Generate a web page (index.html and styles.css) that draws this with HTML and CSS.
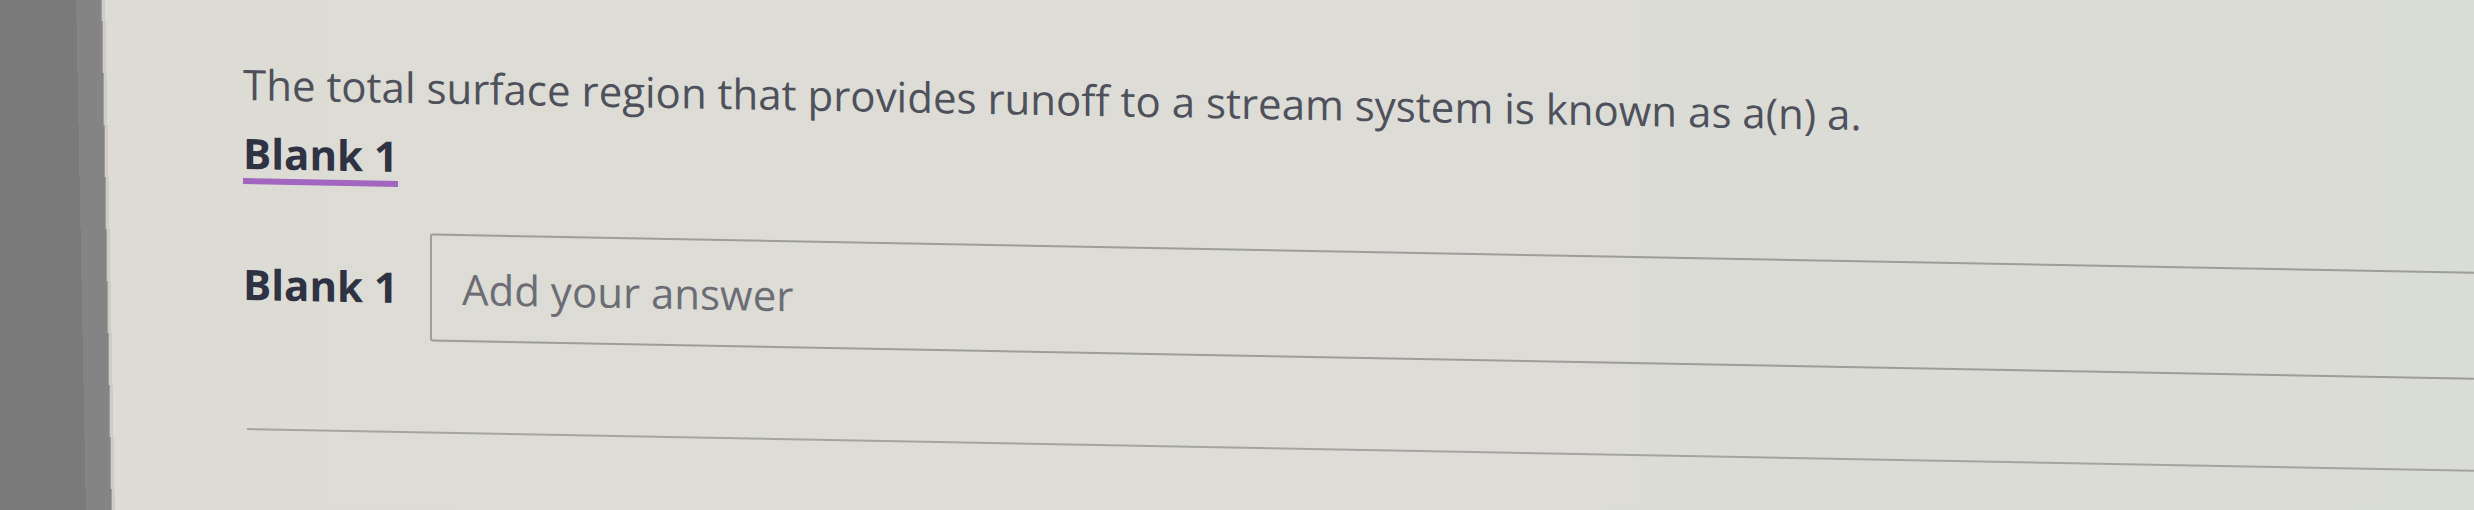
FILE: index.html
```html
<!DOCTYPE html>
<html lang="en" dir="ltr">

<head>
  <meta charset="utf-8">
  <title>Fill in the blank</title>
  <link rel="stylesheet" href="styles.css">
</head>

<body>
  <div class="screen">
    <div class="sidebar"></div>
    <main class="question">
      <p class="prompt">The total surface region that provides runoff to a stream system is known as a(n) a.</p>
      <h2 class="blank-title">Blank 1</h2>
      <div class="answer-row">
        <label class="blank-label" for="blank1">Blank 1</label>
        <input id="blank1" class="answer-input" type="text" placeholder="Add your answer">
      </div>
      <hr class="divider">
    </main>
  </div>
</body>

</html>
```

FILE: styles.css
```css
body {
  margin: 0;
  overflow: hidden;
  font-family: "Open Sans", "DejaVu Sans", sans-serif;
  background: linear-gradient(to right, #dcdbd4, #dddcd6 55%, #dadcd6);
}

.screen {
  display: flex;
  height: 510px;
}

/* dark frame on the left, leaning a little */
.sidebar {
  flex: 0 0 134px;
  margin-left: -22px;
  background: linear-gradient(to right, #797a79 0 103px, #838483 103px 128px, #a09e9a 128px 129px, #cfccc7 129px 132px, #dcdbd4 132px);
  transform: skewX(1.1deg);
}

.question {
  flex: 1;
  min-width: 0;
  padding: 55px 0 0 131px;
  transform: skewY(1.07deg);
  transform-origin: 131px 0;
}

.prompt {
  margin: 0;
  font-size: 42px;
  line-height: 58px;
  color: #4e515b;
  white-space: nowrap;
}

.blank-title {
  width: fit-content;
  margin: 16px 0 0;
  padding-bottom: 1px;
  font-size: 42px;
  line-height: 48px;
  font-weight: 700;
  color: #2e3243;
  border-bottom: 6px solid #a266c1;
}

.answer-row {
  display: flex;
  align-items: center;
  margin: 46px -60px 0 0;
}

.blank-label {
  margin-right: 32px;
  font-size: 42px;
  line-height: 48px;
  font-weight: 700;
  color: #2e3243;
}

.answer-input {
  flex: 1;
  height: 108px;
  box-sizing: border-box;
  padding: 0 30px;
  border: 2px solid #9d9d9a;
  border-radius: 3px;
  background: transparent;
  font-family: "Open Sans", sans-serif;
  font-size: 42px;
  color: #2e3243;
}

.answer-input::placeholder {
  color: #6c6d74;
}

.divider {
  margin: 90px -60px 0 4px;
  border: 0;
  border-top: 2px solid #a4a4a1;
}
```
